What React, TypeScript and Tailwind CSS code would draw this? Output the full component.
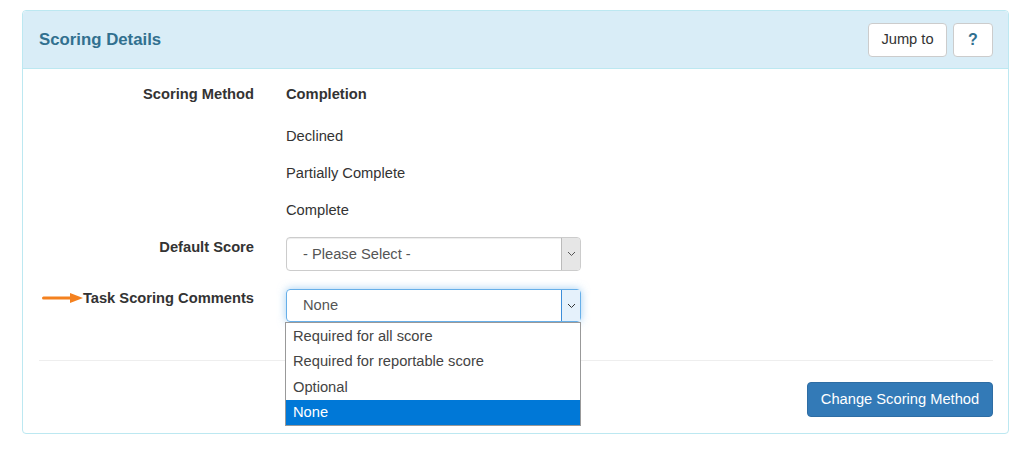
import React from "react";

const font = { fontFamily: '"Liberation Sans", Arial, sans-serif' };

function Chevron({ className }: { className?: string }) {
  return (
    <svg width="9" height="6" viewBox="0 0 9 6" className={className}>
      <path d="M1 1l3.5 3.5L8 1" fill="none" stroke="currentColor" strokeWidth="1" />
    </svg>
  );
}

function Arrow() {
  return (
    <svg width="41" height="12" viewBox="0 0 41 12" className="shrink-0">
      <path d="M1.5 6h28" stroke="#f4811f" strokeWidth="3" strokeLinecap="round" />
      <path d="M28 1l13 5-13 5z" fill="#f4811f" />
    </svg>
  );
}

const options = ["Required for all score", "Required for reportable score", "Optional", "None"];

export default function App() {
  return (
    <div className="h-[449px] w-[1024px] bg-white pt-[10px] text-[14.7px] text-[#333]" style={font}>
      <div className="ml-[22px] w-[987px] rounded-[4px] border border-[#bce8f1] bg-white">
        <div className="flex h-[58px] items-center justify-between rounded-t-[4px] border-b border-[#bce8f1] bg-[#d9edf7] pl-[16px] pr-[15px]">
          <h3 className="text-[16.8px] font-bold text-[#31708f]">Scoring Details</h3>
          <div className="flex gap-[6px]">
            <button className="h-[34px] w-[79px] rounded-[4px] border border-[#ccc] bg-white text-[14.7px] text-[#333]">Jump to</button>
            <button className="h-[34px] w-[40px] rounded-[4px] border border-[#ccc] bg-white text-[16px] font-bold text-[#31708f]">?</button>
          </div>
        </div>

        <div className="pb-[16px] pl-[16px] pr-[15px] pt-[15px]">
          <div className="flex h-[20px] items-center">
            <div className="w-[215px] text-right font-bold">Scoring Method</div>
            <div className="ml-[32px] font-bold">Completion</div>
          </div>
          <div className="ml-[247px] mt-[22px] leading-[20px]">Declined</div>
          <div className="ml-[247px] mt-[17px] leading-[20px]">Partially Complete</div>
          <div className="ml-[247px] mt-[17px] leading-[20px]">Complete</div>

          <div className="mt-[17px] flex">
            <div className="w-[215px] text-right font-bold leading-[20px]">Default Score</div>
            <div className="ml-[32px] flex h-[34px] w-[295px] items-stretch rounded-[4px] border border-[#ccc] shadow-[inset_0_1px_1px_rgba(0,0,0,0.075)]">
              <div className="flex flex-1 items-center pl-[16px] text-[#555]">- Please Select -</div>
              <div className="flex w-[19px] items-center justify-center rounded-r-[3px] border-l border-[#bbb] bg-[#e6e6e6] text-[#555]">
                <Chevron />
              </div>
            </div>
          </div>

          <div className="mt-[18px] flex">
            <div className="-mt-[1px] flex h-[20px] w-[215px] items-center justify-end font-bold leading-[20px]">
              <Arrow />
              <span>Task Scoring Comments</span>
            </div>
            <div className="relative ml-[32px]">
              <div className="flex h-[33px] w-[295px] items-stretch rounded-[4px] border border-[#66afe9] shadow-[0_0_8px_rgba(102,175,233,0.6)]">
                <div className="flex flex-1 items-center pl-[16px] text-[#555]">None</div>
                <div className="flex w-[19px] items-center justify-center border-l border-[#3c8dd9] bg-[#e5f1fb] text-[#333]">
                  <Chevron />
                </div>
              </div>
              <ul className="absolute left-[-1px] top-[33px] z-10 w-[296px] border border-[#999] bg-white text-[14.7px] text-[#444]">
                {options.map((o) => (
                  <li
                    key={o}
                    className={`flex h-[25.5px] items-center pl-[7px] ${o === "None" ? "bg-[#0078d7] text-white" : ""}`}
                  >
                    {o}
                  </li>
                ))}
              </ul>
            </div>
          </div>

          <div className="mt-[38px] border-t border-[#eee]" />

          <div className="mt-[21px] flex justify-end">
            <button className="h-[35px] w-[186px] rounded-[4px] border border-[#2e6da4] bg-[#337ab7] text-[14.7px] text-white">
              Change Scoring Method
            </button>
          </div>
        </div>
      </div>
    </div>
  );
}
